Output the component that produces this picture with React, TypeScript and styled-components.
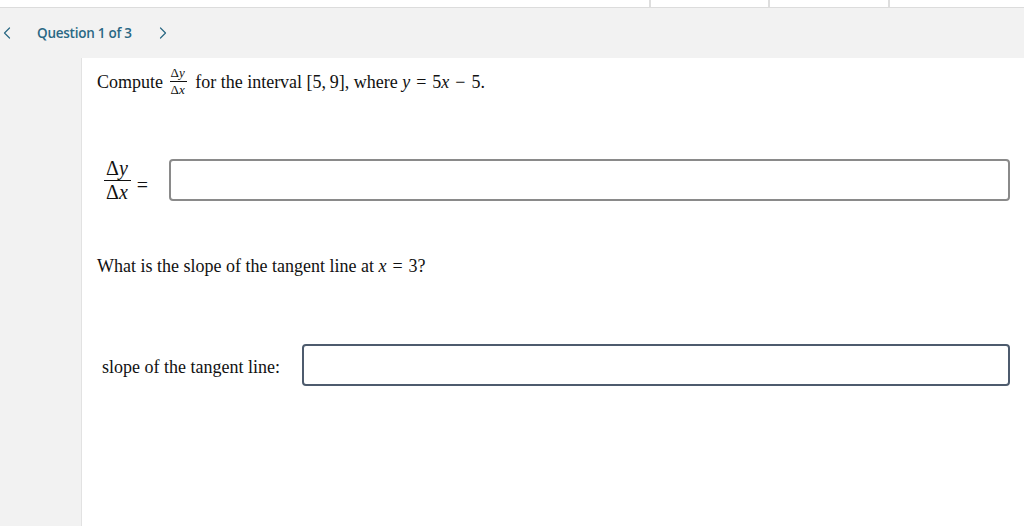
import React from "react";
import styled, { createGlobalStyle } from "styled-components";

const Global = createGlobalStyle`
  html, body { margin: 0; padding: 0; background: #ffffff; }
  body { width: 1024px; height: 526px; overflow: hidden; }
  #root { height: 526px; }
`;

const Page = styled.div`
  display: flex;
  flex-direction: column;
  height: 526px;
  background: #f2f2f2;
`;

const TabStrip = styled.div`
  display: flex;
  height: 7px;
  background: #ffffff;
  border-bottom: 1px solid #dcdcdc;
`;

const Tab = styled.div<{ $w?: number }>`
  box-sizing: border-box;
  flex: ${(p) => (p.$w ? `0 0 ${p.$w}px` : "1 1 auto")};
  border-left: ${(p) => (p.$w ? "2px solid #dedede" : "none")};
`;

const NavBar = styled.div`
  display: flex;
  align-items: center;
  height: 50px;
  background: #f2f2f2;
  font-family: "Open Sans", "Noto Sans", sans-serif;
  color: #2a6884;
`;

const Arrow = styled.button<{ $ml: number }>`
  border: none;
  background: none;
  padding: 0;
  margin-left: ${(p) => p.$ml}px;
  display: flex;
  align-items: center;
`;

const NavTitle = styled.span`
  margin-left: 26px;
  font-size: 13.5px;
  font-weight: 600;
  letter-spacing: -0.25px;
`;

const Body = styled.div`
  flex: 1;
  display: flex;
`;

const Side = styled.div`
  width: 81px;
  background: #f2f2f2;
  border-right: 1px solid #e2e2e2;
`;

const Content = styled.div`
  flex: 1;
  background: #ffffff;
  padding: 9px 14px 0 15px;
  font-family: "Liberation Serif", "Times New Roman", serif;
  font-size: 18px;
  color: #111;
`;

const Prompt = styled.p<{ $mt?: number }>`
  margin: ${(p) => p.$mt ?? 0}px 0 0 0;
  line-height: 30px;
`;

const Var = styled.i`
  font-style: italic;
  margin-right: 1px;
`;

const Op = styled.span`
  margin: 0 6px 0 5px;
`;

const InlineFrac = styled.span`
  display: inline-flex;
  flex-direction: column;
  align-items: center;
  vertical-align: middle;
  font-size: 13px;
  line-height: 12px;
  margin: 0 4px 0 2px;
  position: relative;
  top: -2px;
`;

const InlineNum = styled.span`
  padding: 0 1px 2px;
  border-bottom: 1px solid #111;
`;

const InlineDen = styled.span`
  padding-top: 2px;
`;

const AnswerRow = styled.div<{ $mt: number; $pl: number }>`
  display: flex;
  align-items: center;
  margin-top: ${(p) => p.$mt}px;
  padding-left: ${(p) => p.$pl}px;
`;

const DisplayFrac = styled.span`
  display: inline-flex;
  flex-direction: column;
  align-items: center;
  font-size: 20px;
  line-height: 17px;
`;

const DisplayNum = styled.span`
  padding: 0 2px 3px;
  border-bottom: 1.5px solid #111;
`;

const DisplayDen = styled.span`
  padding-top: 3px;
`;

const Equals = styled.span`
  margin: 0 21px 0 6px;
  position: relative;
  top: 5px;
  font-size: 20px;
`;

const Label = styled.span`
  margin-right: 22px;
  position: relative;
  top: 2px;
`;

const Input = styled.input<{ $border: string }>`
  flex: 1;
  height: 42px;
  box-sizing: border-box;
  border: 2px solid ${(p) => p.$border};
  border-radius: 4px;
  background: #fff;
  outline: none;
`;

const Chevron = ({ dir }: { dir: "left" | "right" }) => (
  <svg width="8" height="12" viewBox="0 0 8 12" fill="none">
    <path
      d={dir === "left" ? "M6.5 1 L1.5 6 L6.5 11" : "M1.5 1 L6.5 6 L1.5 11"}
      stroke="#2a6884"
      strokeWidth="1.2"
      strokeLinecap="round"
      strokeLinejoin="round"
    />
  </svg>
);

export default function App() {
  return (
    <Page>
      <Global />
      <TabStrip>
        <Tab />
        <Tab $w={119} />
        <Tab $w={120} />
        <Tab $w={136} />
      </TabStrip>
      <NavBar>
        <Arrow $ml={3} aria-label="previous">
          <Chevron dir="left" />
        </Arrow>
        <NavTitle>Question 1 of 3</NavTitle>
        <Arrow $ml={27} aria-label="next">
          <Chevron dir="right" />
        </Arrow>
      </NavBar>
      <Body>
        <Side />
        <Content>
          <Prompt>
            Compute{" "}
            <InlineFrac>
              <InlineNum>
                Δ<Var>y</Var>
              </InlineNum>
              <InlineDen>
                Δ<Var>x</Var>
              </InlineDen>
            </InlineFrac>{" "}
            for the interval [5,&thinsp;9], where <Var>y</Var>
            <Op>=</Op>5<Var>x</Var>
            <Op>−</Op>5.
          </Prompt>
          <AnswerRow $mt={61} $pl={7}>
            <DisplayFrac>
              <DisplayNum>
                Δ<Var>y</Var>
              </DisplayNum>
              <DisplayDen>
                Δ<Var>x</Var>
              </DisplayDen>
            </DisplayFrac>
            <Equals>=</Equals>
            <Input $border="#8a8a8a" />
          </AnswerRow>
          <Prompt $mt={50}>
            What is the slope of the tangent line at <Var>x</Var>
            <Op>=</Op>3?
          </Prompt>
          <AnswerRow $mt={63} $pl={5}>
            <Label>slope of the tangent line:</Label>
            <Input $border="#4d5b6d" />
          </AnswerRow>
        </Content>
      </Body>
    </Page>
  );
}
